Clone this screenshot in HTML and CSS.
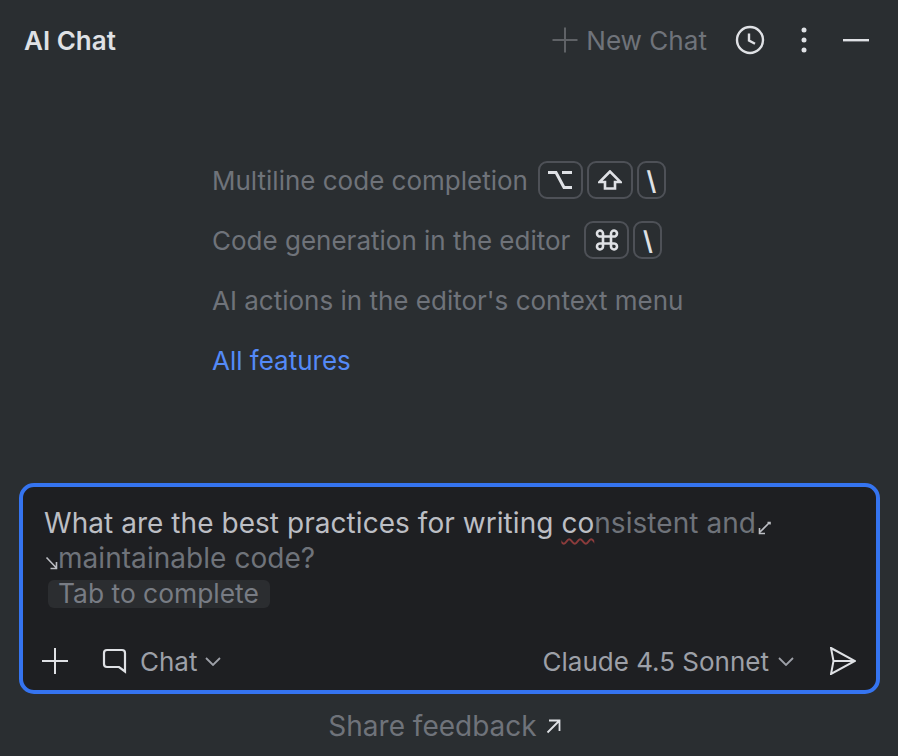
FILE: index.html
```html
<!DOCTYPE html>
<html lang="en">
<head>
    <meta charset="UTF-8">
    <title>AI Chat</title>
    <link rel="stylesheet" href="styles.css">
</head>
<body>

<header class="top-bar">
    <h1 class="title">AI Chat</h1>
    <div class="top-actions">
        <span class="new-chat">
            <svg class="ico" width="28" height="28" viewBox="0 0 28 28"><path d="M14 1.5v25M1.5 14h25" stroke="#5f6266" stroke-width="2" fill="none"/></svg>
            New Chat
        </span>
        <svg class="history" width="30" height="30" viewBox="0 0 30 30" fill="none" stroke="#dfe1e5" stroke-width="2.4"><circle cx="15" cy="15" r="13"/><path d="M14 8.5v7l6 3.2"/></svg>
        <svg class="more" width="6" height="26" viewBox="0 0 6 26" fill="#dfe1e5"><circle cx="3" cy="3" r="2.5"/><circle cx="3" cy="13" r="2.5"/><circle cx="3" cy="23" r="2.5"/></svg>
        <svg class="minimize" width="26" height="3" viewBox="0 0 26 3"><rect width="26" height="2.4" fill="#dfe1e5"/></svg>
    </div>
</header>

<main class="hints">
    <div class="hint">
        <span>Multiline code completion</span>
        <span class="keys">
            <span class="key key-option"><svg width="24" height="20" viewBox="0 0 24 20" fill="none" stroke="#dfe1e5" stroke-width="3"><path d="M0 2.5h8l8 15h8M14 2.5h10"/></svg></span>
            <span class="key key-shift"><svg width="24" height="20" viewBox="0 0 24 20" fill="none" stroke="#dfe1e5" stroke-width="2.6"><path d="M12 1.5 1.5 12H7v6.500h10V12h5.500z"/></svg></span>
            <span class="key key-slash">\</span>
        </span>
    </div>
    <div class="hint">
        <span>Code generation in the editor</span>
        <span class="keys keys-second">
            <span class="key key-option"><svg width="24" height="22" viewBox="0 0 24 22" fill="none" stroke="#dfe1e5" stroke-width="2.6"><path d="M8 7.5h8v7H8zM8 7.5H5.5A3 3 0 1 1 8 4.5zM16 7.5V4.5A3 3 0 1 1 18.5 7.5zM16 14.5h2.5A3 3 0 1 1 16 17.5zM8 14.5V17.5A3 3 0 1 1 5.5 14.5z"/></svg></span>
            <span class="key key-slash">\</span>
        </span>
    </div>
    <div class="hint">AI actions in the editor's context menu</div>
    <a class="hint link" href="#">All features</a>
</main>

<section class="composer">
    <div class="prompt">
        <div class="prompt-line">What are the best practices for writing <span class="typo">co</span><span class="ghost">nsistent and</span><svg class="wrap-mark wrap-end" width="13" height="14" viewBox="0 0 13 14" fill="none" stroke="#bcbec4" stroke-width="1.6"><path d="M11.5 1.5 2 11M1.5 7v5.5H7M9.5 1.5H12v2"/></svg></div>
        <div class="prompt-line ghost"><svg class="wrap-mark wrap-start" width="13" height="14" viewBox="0 0 13 14" fill="none" stroke="#bcbec4" stroke-width="1.6"><path d="M1.5 1.5 11 11.5M11.5 6v6.5H5.5"/></svg>maintainable code?</div>
        <div class="prompt-line"><span class="tab-hint">Tab to complete</span></div>
    </div>
    <div class="toolbar">
        <svg class="add" width="26" height="26" viewBox="0 0 26 26" stroke="#dfe1e5" stroke-width="2" fill="none"><path d="M13 0v26M0 13h26"/></svg>
        <svg class="chat-ico" width="26" height="26" viewBox="0 0 26 26" fill="none" stroke="#dfe1e5" stroke-width="2.2"><path d="M5 2h15a3 3 0 0 1 3 3v18.5L17 19H5a3 3 0 0 1-3-3V5a3 3 0 0 1 3-3z"/></svg>
        <span class="mode">Chat<svg class="chev" width="16" height="9" viewBox="0 0 16 9" fill="none" stroke="#9da0a8" stroke-width="1.8"><path d="M1 1l7 7 7-7"/></svg></span>
        <span class="model">Claude 4.5 Sonnet<svg class="chev" width="16" height="9" viewBox="0 0 16 9" fill="none" stroke="#9da0a8" stroke-width="1.8"><path d="M1 1l7 7 7-7"/></svg></span>
        <svg class="send" width="26" height="28" viewBox="0 0 26 28" fill="none" stroke="#dfe1e5" stroke-width="2"><path d="M1 1 25 14 1 27 3.5 14zM3.5 14H25"/></svg>
    </div>
</section>

<footer class="feedback">
    Share feedback
    <svg width="15" height="15" viewBox="0 0 15 15" fill="none" stroke="#dfe1e5" stroke-width="1.8"><path d="M1.5 13.5 13.5 1.5M3 1.5h10.500V12"/></svg>
</footer>

</body>
</html>
```

FILE: styles.css
```css
body {
    margin: 0;
    height: 756px;
    overflow: hidden;
    display: flex;
    flex-direction: column;
    background: #2a2e31;
    color: #6f737a;
    font-family: 'Inter', sans-serif;
    font-size: 26px;
}
.top-bar {
    display: flex;
    align-items: center;
    justify-content: space-between;
    height: 80px;
    padding: 0 29px 0 24px;
    box-sizing: border-box;
}
.title {
    margin: 0;
    font-size: 26px;
    font-weight: 600;
    color: #dfe1e5;
}
.top-actions {
    display: flex;
    align-items: center;
}
.new-chat {
    display: flex;
    align-items: center;
    gap: 7px;
    color: #6f737a;
    font-size: 26.1px;
    margin-right: 28px;
}
.more {
    margin: 0 36px;
}
.hints {
    flex: 1;
    display: flex;
    flex-direction: column;
    align-items: flex-start;
    padding: 70px 0 0 212px;
}
.hint {
    display: flex;
    align-items: center;
    gap: 10px;
    height: 60px;
    white-space: nowrap;
}
.link {
    color: #548af7;
    text-decoration: none;
}
.keys {
    display: flex;
    gap: 4px;
}
.keys-second {
    margin-left: 4px;
}
.key {
    display: flex;
    align-items: center;
    justify-content: center;
    height: 38px;
    border: 2px solid #4e5157;
    border-radius: 9px;
    box-sizing: border-box;
    color: #dfe1e5;
    font-weight: 600;
}
.key-option {
    width: 45px;
}
.key-shift {
    width: 46px;
}
.key-slash {
    width: 29px;
}
.composer {
    margin: 0 18px 0 19px;
    height: 211px;
    box-sizing: border-box;
    border: 4px solid #3574f0;
    border-radius: 15px;
    background: #1e1f22;
    padding: 19px 19px 0 21px;
    display: flex;
    flex-direction: column;
    justify-content: space-between;
}
.prompt-line {
    height: 35px;
    line-height: 35px;
    font-size: 28px;
    letter-spacing: 0.05px;
    color: #bcbec4;
    white-space: nowrap;
}
.ghost {
    color: #6f737a;
}
.typo {
    text-decoration: underline wavy #8c3b3b 1.5px;
    text-underline-offset: 5px;
}
.wrap-mark {
    vertical-align: -2px;
}
.wrap-end {
    margin-left: 2px;
}
.wrap-start {
    margin-left: 1px;
}
.tab-hint {
    display: inline-block;
    height: 28px;
    line-height: 26px;
    padding: 0 11px 0 10px;
    margin-left: 4px;
    border-radius: 6px;
    background: #2b2d30;
    color: #787c84;
    font-size: 26.4px;
    letter-spacing: 0;
}
.toolbar {
    display: flex;
    align-items: center;
    height: 58px;
    color: #9da0a8;
}
.add {
    margin-left: -2px;
}
.chat-ico {
    margin-left: 34px;
}
.mode {
    display: flex;
    align-items: center;
    gap: 8px;
    margin-left: 12px;
}
.model {
    display: flex;
    align-items: center;
    gap: 9px;
    margin-left: auto;
}
.send {
    margin-left: 36px;
    margin-right: 1px;
}
.feedback {
    height: 62px;
    box-sizing: border-box;
    padding: 2px 9px 0 0;
    display: flex;
    align-items: center;
    justify-content: center;
    gap: 9px;
    font-size: 28px;
    color: #6f737a;
}
```
